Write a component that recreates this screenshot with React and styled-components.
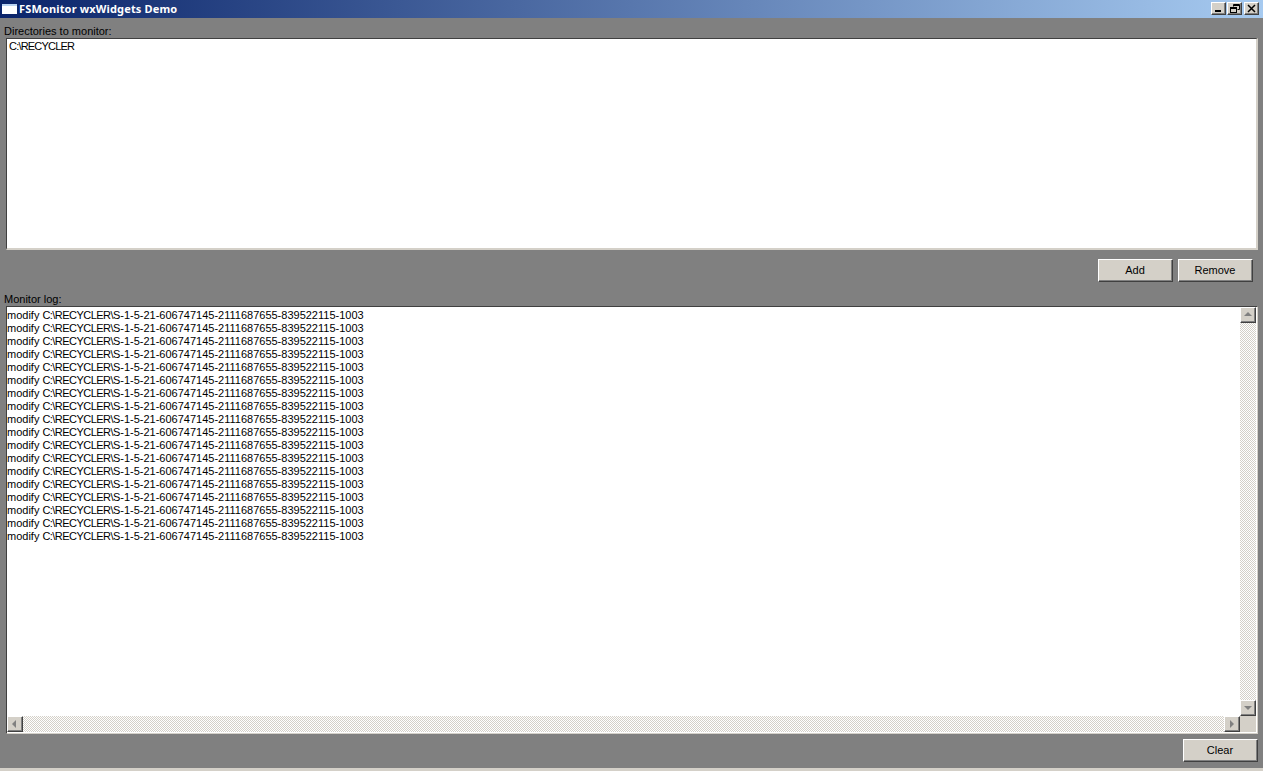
import React from "react"
import styled, { createGlobalStyle } from "styled-components"

const Global = createGlobalStyle`
  html, body { margin: 0; padding: 0; background: #808080; overflow: hidden; }
  body { font-family: "Liberation Sans", Arial, sans-serif; font-size: 11px; color: #000; }
`

const LOG_ROWS = Array.from({ length: 18 }, (_, i) => i)

const raised = `
  background: #d4d0c8;
  border: 1px solid;
  border-color: #ffffff #404040 #404040 #ffffff;
  box-shadow: inset -1px -1px 0 #808080, inset 1px 1px 0 #d4d0c8;
  box-sizing: border-box;
`

const Window = styled.div`
  width: 1263px;
  height: 771px;
  display: flex;
  flex-direction: column;
  background: #808080;
  overflow: hidden;
`
const TitleBar = styled.div`
  height: 18px;
  flex: none;
  display: flex;
  align-items: center;
  padding: 0 4px 1px 2px;
  box-sizing: border-box;
  background: linear-gradient(90deg, #0a246a 0%, #a6caf0 100%);
`
const AppIcon = styled.div`
  width: 15px;
  height: 10px;
  background: #fff;
  border-top: 2px solid #b9d3f0;
  box-sizing: border-box;
`
const Title = styled.div`
  margin-left: 2px;
  flex: 1;
  color: #fff;
  font-family: "Noto Sans", sans-serif;
  font-weight: 700;
  font-size: 11px;
  letter-spacing: 0.15px;
`
const WinButton = styled.div`
  ${raised}
  width: 15px;
  height: 13px;
  margin-left: ${p => p.$gap}px;
  display: flex;
  align-items: center;
  justify-content: center;
`
const Content = styled.div`
  flex: 1;
  display: flex;
  flex-direction: column;
  padding: 6px 5px 0 5px;
  min-height: 0;
`
const Label = styled.div`
  height: 14px;
  flex: none;
  line-height: 14px;
  margin-left: -1px;
  color: #000;
`
const DirBox = styled.div`
  height: 212px;
  flex: none;
  margin-left: 1px;
  background: #fff;
  border-style: solid;
  border-width: 1px 2px 2px 1px;
  border-color: #404040 #d4d0c8 #d4d0c8 #404040;
  box-sizing: border-box;
  padding: 1px 2px;
  line-height: 13px;
`
const Path = styled.span`
  letter-spacing: ${p => p.$tight}px;
`
const ButtonRow = styled.div`
  height: 42px;
  flex: none;
  display: flex;
  justify-content: flex-end;
  gap: 5px;
  padding: 9px 5px 0 0;
  box-sizing: border-box;
`
const Button = styled.div`
  ${raised}
  width: 75px;
  height: 23px;
  padding: 0 1px 2px 0;
  display: flex;
  align-items: center;
  justify-content: center;
  color: #000;
`
const LogBox = styled.div`
  height: 428px;
  flex: none;
  margin-left: 1px;
  display: grid;
  grid-template-columns: 1fr 16px;
  grid-template-rows: 1fr 16px;
  background: #fff;
  border: 1px solid;
  border-color: #404040 #d4d0c8 #d4d0c8 #404040;
  box-sizing: border-box;
  padding: 0 1px 1px 0;
`
const LogText = styled.div`
  background: #fff;
  padding: 2px 0 0 0;
  line-height: 13px;
  white-space: pre;
  overflow: hidden;
`
const checker = `
  background-color: #fff;
  background-image: conic-gradient(#d4d0c8 25%, #fff 0 50%, #d4d0c8 0 75%, #fff 0);
  background-size: 2px 2px;
`
const VScroll = styled.div`
  ${checker}
  display: flex;
  flex-direction: column;
  justify-content: space-between;
`
const HScroll = styled.div`
  ${checker}
  display: flex;
  justify-content: space-between;
`
const Corner = styled.div`
  background: #d4d0c8;
`
const ScrollButton = styled.div`
  ${raised}
  width: 16px;
  height: 16px;
  display: flex;
  align-items: center;
  justify-content: center;
`
const Footer = styled.div`
  flex: none;
  height: 34px;
  display: flex;
  justify-content: flex-end;
  padding: 5px 0 0 0;
  box-sizing: border-box;
`
const BottomEdge = styled.div`
  flex: none;
  height: 3px;
  background: #d4d0c8;
`

const Arrow = ({ dir }) => {
  const points = {
    up: "4,1 0,5 8,5",
    down: "0,2 8,2 4,6",
    left: "5,0 5,8 1,4",
    right: "2,0 2,8 6,4",
  }[dir]
  return (
    <svg width="8" height="8" viewBox="0 0 8 8">
      <polygon points={points} fill="#808080" />
    </svg>
  )
}

export default function App() {
  return (
    <Window>
      <Global />
      <TitleBar>
        <AppIcon />
        <Title>FSMonitor wxWidgets Demo</Title>
        <WinButton $gap={0}>
          <svg width="9" height="9" viewBox="0 0 9 9">
            <rect x="1" y="6" width="6" height="2" fill="#000" />
          </svg>
        </WinButton>
        <WinButton $gap={1}>
          <svg width="10" height="9" viewBox="0 0 10 9" fill="none" stroke="#000">
            <path d="M3.5 2.5V0.5H9.5V5.5H7.5" />
            <path d="M3 1.5H9" />
            <rect x="0.5" y="3.5" width="6" height="5" />
            <path d="M0 4.5H7" />
          </svg>
        </WinButton>
        <WinButton $gap={2}>
          <svg width="9" height="9" viewBox="0 0 9 9" stroke="#000" strokeWidth="1.5">
            <path d="M1 1L8 8M8 1L1 8" />
          </svg>
        </WinButton>
      </TitleBar>
      <Content>
        <Label>Directories to monitor:</Label>
        <DirBox><Path $tight={-0.8}>C:\RECYCLER</Path></DirBox>
        <ButtonRow>
          <Button>Add</Button>
          <Button>Remove</Button>
        </ButtonRow>
        <Label>Monitor log:</Label>
        <LogBox>
          <LogText>
            {LOG_ROWS.map(i => (
              <div key={i}>modify <Path $tight={-0.55}>C:\RECYCLER\</Path>S-1-5-21-606747145-2111687655-839522115-1003</div>
            ))}
          </LogText>
          <VScroll>
            <ScrollButton><Arrow dir="up" /></ScrollButton>
            <ScrollButton><Arrow dir="down" /></ScrollButton>
          </VScroll>
          <HScroll>
            <ScrollButton><Arrow dir="left" /></ScrollButton>
            <ScrollButton><Arrow dir="right" /></ScrollButton>
          </HScroll>
          <Corner />
        </LogBox>
        <Footer>
          <Button>Clear</Button>
        </Footer>
      </Content>
      <BottomEdge />
    </Window>
  )
}
